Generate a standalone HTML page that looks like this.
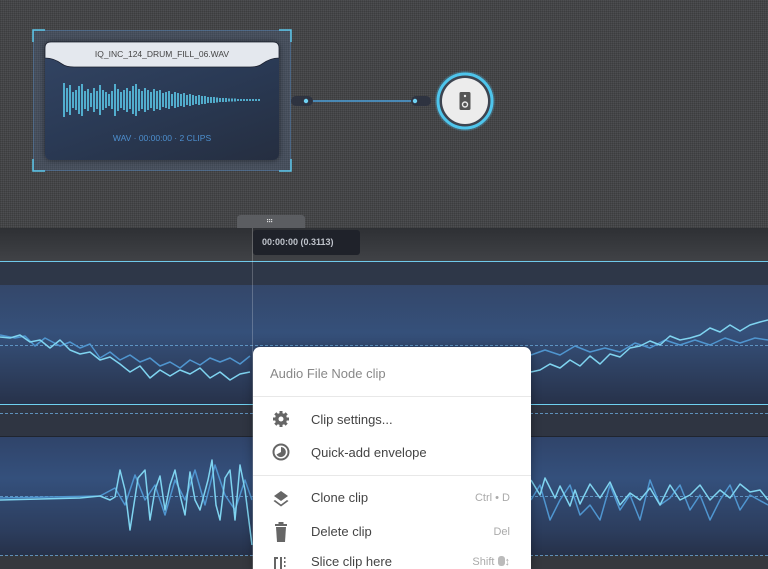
<!DOCTYPE html>
<html><head><meta charset="utf-8"><style>
*{margin:0;padding:0;box-sizing:border-box}
html,body{width:768px;height:569px;overflow:hidden}
body{position:relative;font-family:"Liberation Sans",sans-serif;background:#35383e}
.top{position:absolute;left:0;top:0;width:768px;height:228px;background-color:#4d4e51;background-image:repeating-linear-gradient(0deg,rgba(0,0,0,.12) 0 1px,transparent 1px 2px),repeating-linear-gradient(90deg,rgba(0,0,0,.12) 0 1px,transparent 1px 2px)}
.abs{position:absolute}
.menu{position:absolute;left:253px;top:347px;width:278px;height:222px;overflow:hidden;background:#fff;border-radius:7px 7px 0 0;box-shadow:0 2px 10px rgba(0,0,0,.35)}
.menu .t{position:absolute;left:17px;font-size:13px;color:#444}
.menu .s{position:absolute;right:21px;font-size:11px;color:#aaa}
.menu .d{position:absolute;left:0;right:0;height:1px;background:#e8e8e8}
</style></head><body>
<div class="top"></div>
<div class="abs" style="left:33px;top:30px;width:258px;height:141px;background:rgba(80,120,170,.22);border:1px solid rgba(90,150,210,.35)"></div>
<svg class="abs" style="left:0;top:0" width="768" height="228">
<g stroke="#5cc6e8" stroke-width="1.5" fill="none">
<path d="M33 42V30H45M279 30H291V42M33 159V171H45M279 171H291V159"/></g>
</svg>
<div class="abs" style="left:45px;top:42px;width:234px;height:118px;border-radius:6px;background:linear-gradient(160deg,#334564 0%,#2a3a55 50%,#252e40 100%);box-shadow:0 0 6px rgba(0,0,0,.5)"></div>
<svg class="abs" style="left:0;top:0" width="768" height="228">
<path d="M45 48Q45 42 51 42H273Q279 42 279 48V58Q270 58 262 64Q258 67 250 67H74Q66 67 62 64Q54 58 45 58Z" fill="#e4e8ee" stroke="#1d2230" stroke-width="0.8"/>
<text x="162" y="57" font-family="Liberation Sans" font-size="8.5" fill="#444" text-anchor="middle">IQ_INC_124_DRUM_FILL_06.WAV</text>
<path stroke="#5ccaeb" stroke-width="1.6" d="M64 83V117M67 88V112M70 85V115M73 92V108M76 90V110M79 86V114M82 84V116M85 91V109M88 89V111M91 93V107M94 88V112M97 91V109M100 85V115M103 90V110M106 92V108M109 94V106M112 91V109M115 84V116M118 89V111M121 92V108M124 90V110M127 88V112M130 91V109M133 86V114M136 84V116M139 89V111M142 91V109M145 88V112M148 90V110M151 92V108M154 89V111M157 91V109M160 90V110M163 93V107M166 92V108M169 91V109M172 94V106M175 92V108M178 93V107M181 94V106M184 93V107M187 95V105M190 94V106M193 95V105M196 96V104M199 95V105M202 96V104M205 96V104M208 97V103M211 97V103M214 97V103M217 97.5V102.5M220 98V102M223 98V102M226 98V102M229 98.5V101.5M232 98.5V101.5M235 98.5V101.5M238 99V101M241 99V101M244 99V101M247 99V101M250 99V101M253 99V101M256 99V101M259 99V101"/>
<text x="162" y="141" font-family="Liberation Sans" font-size="8.5" fill="#4d8fcf" text-anchor="middle">WAV  ·  00:00:00  ·  2 CLIPS</text>
<line x1="306" y1="101" x2="414" y2="101" stroke="#4b9fd8" stroke-width="1.5"/>
<rect x="291" y="96" width="22" height="10" rx="5" fill="#2e3340"/>
<rect x="411" y="96" width="20" height="10" rx="5" fill="#2e3340"/>
<circle cx="306" cy="101" r="2.2" fill="#6fd2f3"/><circle cx="415" cy="101" r="2.2" fill="#6fd2f3"/>
<circle cx="465" cy="101" r="30" fill="rgba(80,190,235,.25)"/>
<circle cx="465" cy="101" r="27" fill="#3d4450" stroke="#4ec5ec" stroke-width="3"/>
<circle cx="465" cy="101" r="23" fill="#ececec"/>
<rect x="459.5" y="92" width="11" height="18" rx="1.5" fill="#555"/>
<circle cx="465" cy="104.5" r="3.2" fill="#ececec"/><circle cx="465" cy="104.5" r="1.8" fill="#555"/>
<circle cx="465" cy="96" r="1.2" fill="#ececec"/>
<path d="M237 228V219Q237 215 241 215H301Q305 215 305 219V228Z" fill="#5b5d61"/>
<g fill="#ddd"><rect x="267" y="219" width="1.2" height="1.2"/><rect x="269" y="219" width="1.2" height="1.2"/><rect x="271" y="219" width="1.2" height="1.2"/><rect x="267" y="221" width="1.2" height="1.2"/><rect x="269" y="221" width="1.2" height="1.2"/><rect x="271" y="221" width="1.2" height="1.2"/></g>
</svg>
<div class="abs" style="left:0;top:228px;width:768px;height:33px;background:linear-gradient(#2e3034,#404246)"></div>
<div class="abs" style="left:0;top:261px;width:768px;height:1px;background:#6fc9ea"></div>
<div class="abs" style="left:0;top:262px;width:768px;height:23px;background:#2e3748"></div>
<div class="abs" style="left:0;top:285px;width:768px;height:119px;background:linear-gradient(#34476a,#35507a 40%,#2c3c5a 80%,#27324a)"></div>
<div class="abs" style="left:0;top:404px;width:768px;height:1px;background:#6fd0ef"></div>
<div class="abs" style="left:0;top:405px;width:768px;height:31px;background:#2f3542"></div>
<div class="abs" style="left:0;top:436px;width:768px;height:1px;background:#20252f"></div>
<div class="abs" style="left:0;top:437px;width:768px;height:118px;background:linear-gradient(#30446a,#34507c 35%,#2c3d5d 80%,#263149)"></div>
<div class="abs" style="left:0;top:556px;width:768px;height:13px;background:#35383e"></div>
<svg class="abs" style="left:0;top:0" width="768" height="569">
<g stroke="#6aa7d8" stroke-width="1" stroke-dasharray="3 2" opacity=".8">
<line x1="0" y1="345.5" x2="768" y2="345.5"/><line x1="0" y1="413.5" x2="768" y2="413.5"/><line x1="0" y1="496.5" x2="768" y2="496.5"/><line x1="0" y1="555.5" x2="768" y2="555.5"/></g>
<line x1="252.5" y1="228" x2="252.5" y2="569" stroke="rgba(255,255,255,.22)"/>
<g fill="none" stroke-width="1.5" stroke-linejoin="round">
<path stroke="#4f95cf" d="M0 335 15 338 25 336 35 346 45 338 60 346 70 342 80 348 90 344 100 358 110 352 120 360 130 355 140 362 150 358 160 366 170 362 180 368 190 360 200 365 210 358 220 362 230 358 240 364 250 356M531 355 545 350 560 355 575 346 590 352 605 348 620 352 635 343 650 348 665 340 680 345 695 340 710 345 725 338 740 343 755 338 768 340"/>
<path stroke="#7fd4f0" d="M0 337 10 338 20 335 30 342 40 340 50 348 60 340 70 350 80 354 90 352 100 360 110 357 120 364 130 372 140 366 150 378 160 370 170 376 180 370 190 374 200 368 210 378 220 372 230 380 240 374 250 372M531 372 540 370 550 364 560 368 570 360 580 366 590 356 600 364 610 354 620 357 630 348 640 346 650 341 660 345 670 336 680 340 690 338 700 335 710 328 720 332 730 325 740 331 750 325 760 322 768 320"/>
<path stroke="#4f95cf" d="M0 498 50 497 100 496 115 488 125 505 135 475 145 500 155 485 165 515 175 480 185 500 195 470 205 505 215 465 225 495 235 510 245 480 252 500M531 500 540 485 550 520 560 500 570 485 580 515 590 505 600 520 610 485 620 510 630 495 640 520 650 480 660 505 670 498 680 485 690 510 700 495 710 520 720 500 730 485 740 510 750 495 768 505"/>
<path stroke="#7fd4f0" d="M0 500 40 499 80 498 100 496 110 500 115 497 120 470 125 490 130 530 138 478 145 470 150 520 155 490 160 476 165 510 170 485 175 470 180 495 185 515 190 472 195 500 200 510 208 480 212 460 216 505 220 520 225 478 230 470 235 520 240 465 245 490 252 545M531 480 540 495 545 478 555 498 560 486 570 506 575 490 580 504 590 484 600 498 610 482 620 505 630 493 640 500 650 488 660 505 670 485 680 500 690 495 700 485 710 500 720 490 730 498 740 484 750 492 760 490 768 500"/>
</g></svg>
<div class="abs" style="left:253px;top:230px;width:107px;height:25px;background:#1f222a;border-radius:3px;color:#c0c4cc;font-size:9px;font-weight:bold;line-height:25px;padding-left:9px">00:00:00 (0.3113)</div>
<div class="menu">
<div class="t" style="top:19px;color:#888">Audio File Node clip</div>
<div class="d" style="top:49px"></div>
<svg class="abs" style="left:18px;top:62px" width="22" height="160">
<g fill="#666">
<circle cx="10" cy="10" r="6"/>
<g stroke="#666" stroke-width="3"><line x1="10" y1="2" x2="10" y2="18"/><line x1="2" y1="10" x2="18" y2="10"/><line x1="4.3" y1="4.3" x2="15.7" y2="15.7"/><line x1="15.7" y1="4.3" x2="4.3" y2="15.7"/></g>
<circle cx="10" cy="10" r="2.5" fill="#fff"/>
<circle cx="10" cy="43" r="7.5" fill="none" stroke="#666" stroke-width="2"/>
<path d="M10 38A5 5 0 1 1 5.5 45.5L10 43Z"/>
<path d="M10 82L17 87L10 92L3 87Z"/><path d="M4 91L10 95.5L16 91L17.5 92L10 97.5L2.5 92Z"/>
<rect x="4" y="115" width="12" height="2"/><rect x="7.5" y="113" width="5" height="2"/><path d="M5 118H15L14 133H6Z"/>
<path d="M3 165V148H7V150H5V165Z"/><rect x="9" y="148" width="2" height="17"/><rect x="13" y="148" width="1.5" height="2"/><rect x="13" y="152" width="1.5" height="2"/><rect x="13" y="156" width="1.5" height="2"/>
</g></svg>
<div class="t" style="left:58px;top:65px">Clip settings...</div>
<div class="t" style="left:58px;top:98px">Quick-add envelope</div>
<div class="d" style="top:128px"></div>
<div class="t" style="left:58px;top:143px">Clone clip</div><div class="s" style="top:145px">Ctrl • D</div>
<div class="t" style="left:58px;top:177px">Delete clip</div><div class="s" style="top:179px">Del</div>
<div class="t" style="left:58px;top:207px;line-height:15px">Slice clip here</div><div class="s" style="top:209px;line-height:13px">Shift <span style="display:inline-block;width:7px;height:10px;background:#bbb;border-radius:3px;vertical-align:-1px"></span>↕</div>
</div>
</body></html>
